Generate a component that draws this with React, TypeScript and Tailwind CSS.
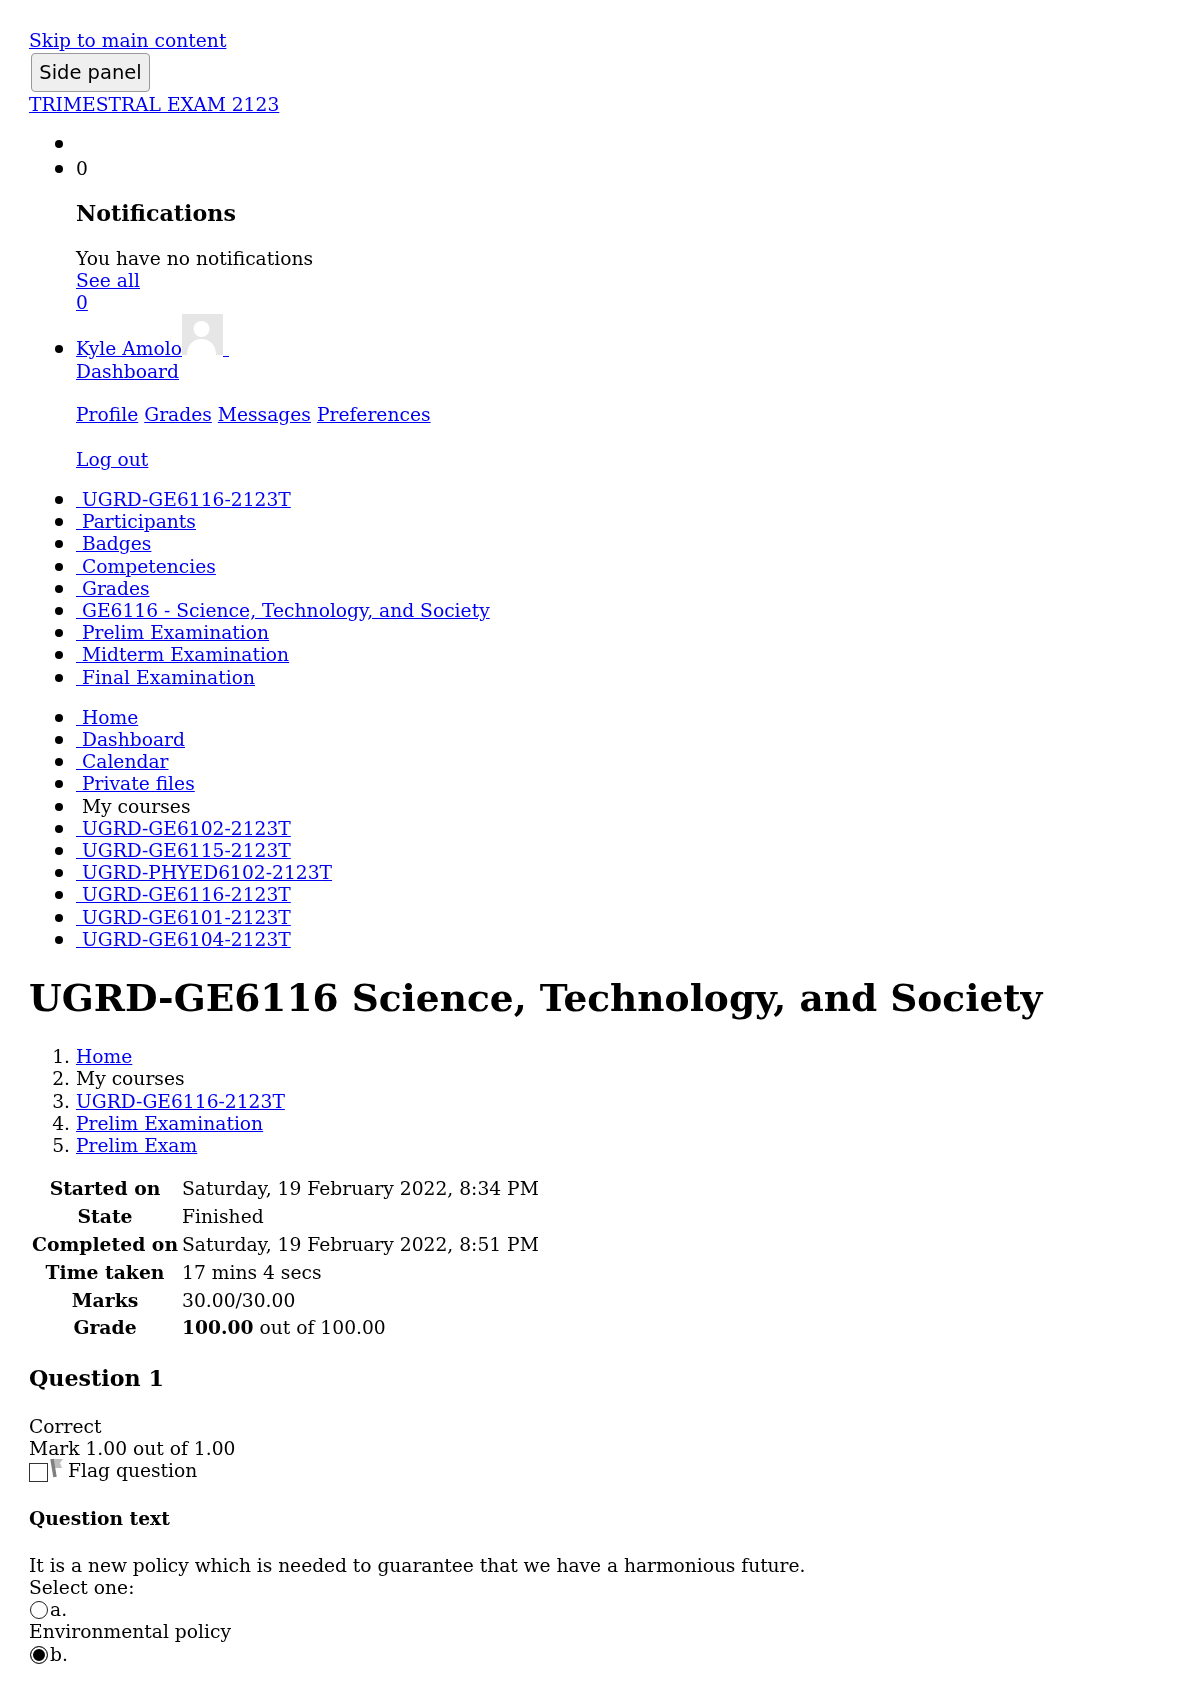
const A = ({ children }: { children: React.ReactNode }) => (
  <a href="#" className="text-[#0000ee] underline">{children}</a>
);

const Bl = ({ children }: { children: React.ReactNode }) => (
  <li className="relative list-none before:content-[''] before:absolute before:left-[-21px] before:top-[7px] before:w-[8px] before:h-[8px] before:rounded-full before:bg-black">{children}</li>
);

const Row = ({ h, children }: { h: string; children: React.ReactNode }) => (
  <tr>
    <th className="py-[1.3px] px-[1px] text-center align-baseline font-bold text-[18.8px]">{h}</th>
    <td className="py-[1.3px] pl-[1px] align-baseline text-[18.7px]">{children}</td>
  </tr>
);

export default function App() {
  return (
    <div className="bg-white px-[29px] pt-[30px] text-[18.7px] leading-[22.2px] text-black h-[1698px] overflow-hidden blur-[0.35px]" style={{ fontFamily: '"DejaVu Serif", serif' }}>
      <div><A>Skip to main content</A></div>
      <button className="block mt-[1px] mb-[2px] ml-[2px] w-[119px] h-[39px] rounded-[4px] border border-[#999999] bg-[#efefef] text-[19.5px]" style={{ fontFamily: '"DejaVu Sans", sans-serif' }}>Side panel</button>
      <div><A>TRIMESTRAL EXAM 2123</A></div>

      <ul className="mt-[16px] pl-[47px]">
        <li className="relative list-none h-[26px] before:content-[''] before:absolute before:left-[-21px] before:top-[8px] before:w-[8px] before:h-[8px] before:rounded-full before:bg-black" />
        <Bl>
          0
          <h3 className="mt-[19px] mb-[22px] text-[22.2px] leading-[26px] font-bold">Notifications</h3>
          <div>You have no notifications</div>
          <div><A>See all</A></div>
          <div><A>0</A></div>
        </Bl>
      </ul>
      <ul className="pl-[47px]">
        <li className="relative list-none before:content-[''] before:absolute before:left-[-21px] before:top-[31px] before:w-[8px] before:h-[8px] before:rounded-full before:bg-black">
          <a href="#" className="text-[#0000ee] underline">Kyle Amolo<span className="inline-block w-[41px] h-[41px] bg-[#e6e6e6] align-baseline relative overflow-hidden"><svg viewBox="0 0 41 41" className="absolute inset-0 w-full h-full"><circle cx="19.5" cy="15" r="8" fill="#fff" /><path d="M5 41c0-10 6-16 14.500-16s14.500 6 14.500 16z" fill="#fff" /></svg></span>&nbsp;</a>
          <div className="mt-[1px]"><A>Dashboard</A></div>
          <div className="mt-[20px]"><A>Profile</A> <A>Grades</A> <A>Messages</A> <A>Preferences</A></div>
          <div className="mt-[23px]"><A>Log out</A></div>
        </li>
      </ul>
      <ul className="mt-[18px] pl-[47px]">
        {["UGRD-GE6116-2123T","Participants","Badges","Competencies","Grades","GE6116 - Science, Technology, and Society","Prelim Examination","Midterm Examination","Final Examination"].map(t => <Bl key={t}><A>&nbsp;{t}</A></Bl>)}
      </ul>
      <ul className="mt-[18px] pl-[47px]">
        {["Home","Dashboard","Calendar","Private files"].map(t => <Bl key={t}><A>&nbsp;{t}</A></Bl>)}
        <Bl>&nbsp;My courses</Bl>
        {["UGRD-GE6102-2123T","UGRD-GE6115-2123T","UGRD-PHYED6102-2123T","UGRD-GE6116-2123T","UGRD-GE6101-2123T","UGRD-GE6104-2123T"].map((t, i) => <Bl key={i}><A>&nbsp;{t}</A></Bl>)}
      </ul>
      <h1 className="mt-[25px] mb-[25px] text-[37.5px] leading-[45px] font-bold">UGRD-GE6116 Science, Technology, and Society</h1>
      <ol className="pl-[47px] list-decimal">
        <li><A>Home</A></li>
        <li>My courses</li>
        <li><A>UGRD-GE6116-2123T</A></li>
        <li><A>Prelim Examination</A></li>
        <li><A>Prelim Exam</A></li>
      </ol>
      <table className="mt-[17px] border-separate border-spacing-[2px]">
        <tbody>
          <Row h="Started on">Saturday, 19 February 2022, 8:34 PM</Row>
          <Row h="State">Finished</Row>
          <Row h="Completed on">Saturday, 19 February 2022, 8:51 PM</Row>
          <Row h="Time taken">17 mins 4 secs</Row>
          <Row h="Marks">30.00/30.00</Row>
          <Row h="Grade"><b>100.00</b> out of 100.00</Row>
        </tbody>
      </table>
      <h3 className="mt-[22px] mb-[25px] text-[22.2px] leading-[26px] font-bold">Question 1</h3>
      <div>Correct</div>
      <div>Mark 1.00 out of 1.00</div>
      <div className="flex items-start">
        <input type="checkbox" className="appearance-none w-[19px] h-[19px] mt-[3px] border-[1.5px] border-[#333333] bg-white" />
        <svg viewBox="0 0 14 20" className="w-[14px] h-[20px] ml-[2px] mr-[-2px] -mt-[2px]">
          <path d="M1 1h12l-3 4 2 5H5z" fill="#bdbdbd" />
          <path d="M2 1l3 18" fill="none" stroke="#808080" strokeWidth="3.500" />
        </svg>
        <span>&nbsp;Flag question</span>
      </div>
      <h4 className="mt-[24px] mb-[26px] font-bold">Question text</h4>
      <div className="tracking-[-0.05px]">It is a new policy which is needed to guarantee that we have a harmonious future.</div>
      <div>Select one:</div>
      <div className="flex items-center"><input type="radio" name="q" className="appearance-none w-[18px] h-[18px] ml-[1px] mr-[2px] rounded-full border border-[#222222] bg-white" /><span>a.</span></div>
      <div>Environmental policy</div>
      <div className="flex items-center"><input type="radio" name="q" defaultChecked className="appearance-none w-[18px] h-[18px] ml-[1px] mr-[2px] rounded-full border border-[#222222] bg-black shadow-[inset_0_0_0_2px_white]" /><span>b.</span></div>
    </div>
  );
}
